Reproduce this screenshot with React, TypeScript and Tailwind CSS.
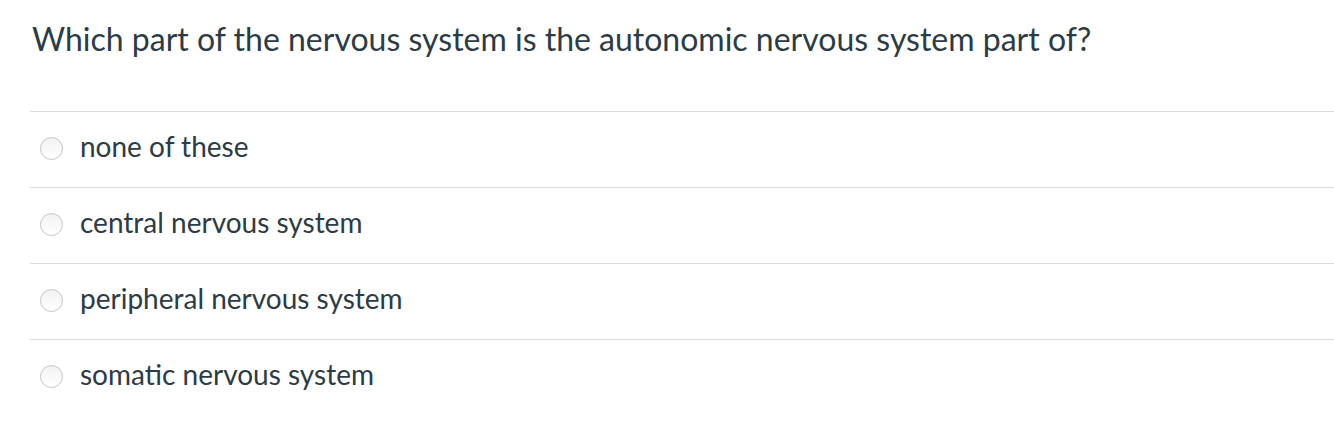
const options = [
  "none of these",
  "central nervous system",
  "peripheral nervous system",
  "somatic nervous system",
];

const Radio = () => (
  <span className="w-[23px] h-[23px] rounded-full border border-[#c4c4c4] bg-gradient-to-b from-[#f2f2f2] to-white shrink-0" />
);

export default function App() {
  return (
    <div className="w-[1334px] h-[430px] bg-white text-[#2d3b45] font-['Lato','Open_Sans',sans-serif] pl-[30px]">
      <h1 className="pt-[18px] pl-[2px] text-[32px] leading-[42px] font-normal">
        Which part of the nervous system is the autonomic nervous system part of?
      </h1>
      <div className="mt-[51px]">
        {options.map((opt) => (
          <div
            key={opt}
            className="h-[76px] border-t border-[#dcdcdc] flex items-center gap-[17px] pl-[10px] pb-[2px]"
          >
            <Radio />
            <span className="text-[28px] leading-none mb-[5px]">{opt}</span>
          </div>
        ))}
      </div>
    </div>
  );
}
